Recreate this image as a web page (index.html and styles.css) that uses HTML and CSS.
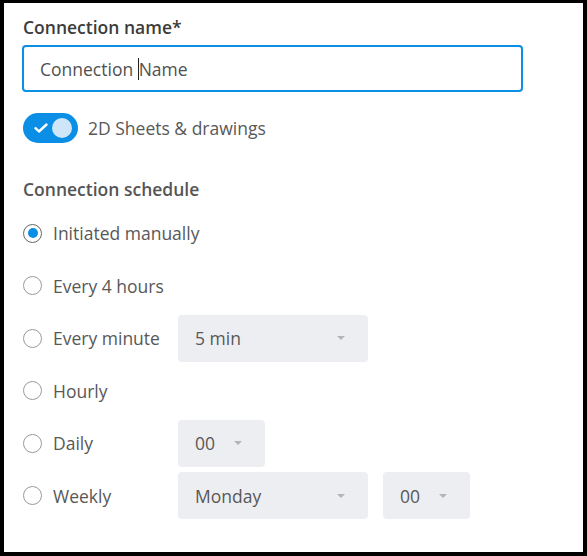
FILE: index.html
```html
<!DOCTYPE html>
<html lang="en">
<head>
<meta charset="utf-8">
<title>Connection</title>
<link rel="stylesheet" href="styles.css">
</head>
<body>
<div class="panel">
  <div class="field-label">Connection name*</div>
  <div class="text-input"><span>Connection&nbsp;</span><span class="cursor"></span><span>Name</span></div>

  <div class="toggle-row">
    <div class="toggle">
      <svg class="check" width="14" height="10" viewBox="0 0 14 10"><path d="M1.5 5.2 L5 8.5 L12.5 1.5" fill="none" stroke="#fff" stroke-width="2.4" stroke-linecap="round" stroke-linejoin="round"/></svg>
      <span class="knob"></span>
    </div>
    <span class="toggle-text">2D Sheets &amp; drawings</span>
  </div>

  <div class="section-label">Connection schedule</div>

  <div class="options">
    <div class="option"><span class="radio checked"><span class="dot"></span></span><span class="opt-text">Initiated manually</span></div>
    <div class="controls"></div>

    <div class="option"><span class="radio"></span><span class="opt-text">Every 4 hours</span></div>
    <div class="controls"></div>

    <div class="option"><span class="radio"></span><span class="opt-text">Every minute</span></div>
    <div class="controls"><div class="select wide"><span>5 min</span><span class="caret"></span></div></div>

    <div class="option"><span class="radio"></span><span class="opt-text">Hourly</span></div>
    <div class="controls"></div>

    <div class="option"><span class="radio"></span><span class="opt-text">Daily</span></div>
    <div class="controls"><div class="select small"><span>00</span><span class="caret"></span></div></div>

    <div class="option"><span class="radio"></span><span class="opt-text">Weekly</span></div>
    <div class="controls"><div class="select wide"><span>Monday</span><span class="caret"></span></div><div class="select small"><span>00</span><span class="caret"></span></div></div>
  </div>
</div>
</body>
</html>
```
FILE: styles.css
```css
html, body {
  margin: 0;
  padding: 0;
  background: #000;
}
body {
  font-family: "Open Sans", "Noto Sans", sans-serif;
  font-size: 17.5px;
  color: #585858;
}
.panel {
  box-sizing: border-box;
  margin: 3px 4px 0 4px;
  width: 579px;
  height: 549px;
  background: #fff;
  padding: 12px 0 0 18px;
}
.field-label {
  font-weight: 600;
  color: #3c3c3c;
  line-height: 24px;
  height: 24px;
  padding-left: 1px;
}
.text-input {
  box-sizing: border-box;
  margin-top: 6px;
  width: 501px;
  height: 47px;
  border: 2px solid #0b8ee6;
  border-radius: 4px;
  display: flex;
  align-items: center;
  padding-left: 16px;
  color: #505050;
}
.cursor {
  display: inline-block;
  width: 0;
  height: 22px;
  border-left: 1px solid #222;
}
.toggle-row {
  margin-top: 21px;
  display: flex;
  align-items: center;
  height: 30px;
}
.toggle {
  box-sizing: border-box;
  margin-left: 1px;
  width: 55px;
  height: 30px;
  border-radius: 15px;
  background: #0b8ee6;
  display: flex;
  align-items: center;
  justify-content: space-between;
  padding: 0 6px 0 11px;
}
.check {
  display: block;
}
.knob {
  width: 20px;
  height: 20px;
  border-radius: 50%;
  background: #cfe6f8;
}
.toggle-text {
  margin-left: 10px;
}
.section-label {
  margin-top: 34px;
  font-weight: 600;
  font-size: 17.5px;
  color: #555;
  line-height: 24px;
  height: 24px;
  padding-left: 1px;
}
.options {
  margin-top: 8.5px;
  display: grid;
  grid-template-columns: 156px auto;
  grid-auto-rows: 47px;
  row-gap: 5.5px;
}
.option {
  display: flex;
  align-items: center;
  white-space: nowrap;
}
.radio {
  box-sizing: border-box;
  flex: none;
  margin-left: 1px;
  width: 19px;
  height: 19px;
  border-radius: 50%;
  border: 1.5px solid #9a9a9a;
  display: flex;
  align-items: center;
  justify-content: center;
}
.radio.checked {
  border-color: #666;
}
.dot {
  width: 10px;
  height: 10px;
  border-radius: 50%;
  background: #0b8ee6;
}
.opt-text {
  margin-left: 11px;
}
.controls {
  display: flex;
  gap: 15px;
}
.select {
  box-sizing: border-box;
  height: 47px;
  border-radius: 4px;
  background: #edeef2;
  display: flex;
  align-items: center;
  justify-content: space-between;
  padding: 0 23px 0 17px;
  color: #585858;
}
.select.wide {
  width: 190px;
}
.select.small {
  width: 87px;
}
.caret {
  width: 0;
  height: 0;
  border-left: 4px solid transparent;
  border-right: 4px solid transparent;
  border-top: 4px solid #b3b3b8;
}
```
